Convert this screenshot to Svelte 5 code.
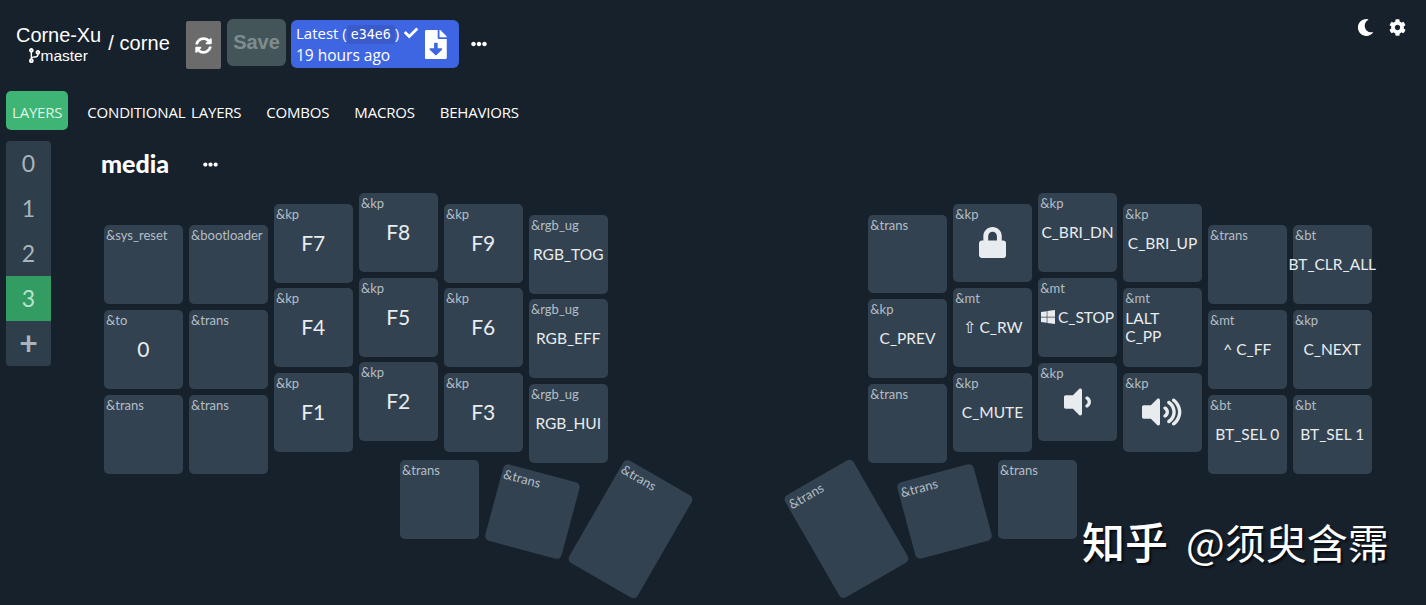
<script>
  const icons = {
    sync: [512, 'M370.72 133.28C339.458 104.008 298.888 87.962 255.848 88c-77.458.068-144.328 53.178-162.791 126.85-1.344 5.363-6.122 9.15-11.651 9.15H24.103c-7.498 0-13.194-6.807-11.807-14.176C33.933 94.924 134.813 8 256 8c66.448 0 126.791 26.136 171.315 68.685L463.03 40.97C478.149 25.851 504 36.559 504 57.941V192c0 13.255-10.745 24-24 24H345.941c-21.382 0-32.09-25.851-16.971-40.971l41.75-41.749zM32 296h134.059c21.382 0 32.09 25.851 16.971 40.971l-41.75 41.75c31.262 29.273 71.835 45.319 114.876 45.28 77.418-.07 144.315-53.144 162.787-126.849 1.344-5.363 6.122-9.15 11.651-9.15h57.304c7.498 0 13.194 6.807 11.807 14.176C478.067 417.076 377.187 504 256 504c-66.448 0-126.791-26.136-171.315-68.685L48.97 471.03C33.851 486.149 8 475.441 8 454.059V320c0-13.255 10.745-24 24-24z'],
    check: [512, 'M173.898 439.404l-166.4-166.4c-9.997-9.997-9.997-26.206 0-36.204l36.203-36.204c9.997-9.998 26.207-9.998 36.204 0L192 312.69 432.095 72.596c9.997-9.997 26.207-9.997 36.204 0l36.203 36.204c9.997 9.997 9.997 26.206 0 36.204l-294.4 294.401c-9.998 9.997-26.207 9.997-36.204-.001z'],
    file: [384, 'M224 136V0H24C10.7 0 0 10.7 0 24v464c0 13.3 10.7 24 24 24h336c13.3 0 24-10.7 24-24V160H248c-13.2 0-24-10.8-24-24zm76.45 211.36l-96.42 95.7c-6.65 6.61-17.39 6.61-24.04 0l-96.42-95.7C73.42 337.29 80.54 320 94.82 320H160v-80c0-8.84 7.16-16 16-16h32c8.84 0 16 7.16 16 16v80h65.18c14.28 0 21.4 17.29 11.27 27.36zM377 105L279.1 7c-4.5-4.5-10.6-7-17-7H256v128h128v-6.1c0-6.3-2.5-12.4-7-16.9z'],
    dots: [512, 'M328 256c0 39.8-32.2 72-72 72s-72-32.2-72-72 32.2-72 72-72 72 32.2 72 72zm104-72c-39.8 0-72 32.2-72 72s32.2 72 72 72 72-32.2 72-72-32.2-72-72-72zm-352 0c-39.8 0-72 32.2-72 72s32.2 72 72 72 72-32.2 72-72-32.2-72-72-72z'],
    moon: [512, 'M283.211 512c78.962 0 151.079-35.925 198.857-94.792 7.068-8.708-.639-21.43-11.562-19.35-124.203 23.654-238.262-71.576-238.262-196.954 0-72.222 38.662-138.635 101.498-174.394 9.686-5.512 7.25-20.197-3.756-22.23A258.156 258.156 0 0 0 283.211 0c-141.309 0-256 114.511-256 256 0 141.309 114.511 256 256 256z'],
    cog: [512, 'M487.4 315.7l-42.6-24.6c4.3-23.2 4.3-47 0-70.2l42.6-24.6c4.9-2.8 7.1-8.6 5.5-14-11.1-35.6-30-67.8-54.7-94.6-3.8-4.1-10-5.1-14.8-2.3L380.8 110c-17.9-15.4-38.5-27.3-60.8-35.1V25.8c0-5.6-3.9-10.5-9.4-11.7-36.7-8.2-74.3-7.8-109.2 0-5.5 1.2-9.4 6.1-9.4 11.7V75c-22.2 7.9-42.8 19.8-60.8 35.1L88.7 85.5c-4.9-2.8-11-1.9-14.8 2.3-24.7 26.7-43.6 58.9-54.7 94.6-1.7 5.4.6 11.2 5.5 14L67.3 221c-4.3 23.2-4.3 47 0 70.2l-42.6 24.6c-4.9 2.8-7.1 8.6-5.5 14 11.1 35.6 30 67.8 54.7 94.6 3.8 4.1 10 5.1 14.8 2.3l42.6-24.6c17.9 15.4 38.5 27.3 60.8 35.1v49.2c0 5.6 3.9 10.5 9.4 11.7 36.7 8.2 74.3 7.8 109.2 0 5.5-1.2 9.4-6.1 9.4-11.7v-49.2c22.2-7.9 42.8-19.8 60.8-35.1l42.6 24.6c4.9 2.8 11 1.9 14.8-2.3 24.7-26.7 43.6-58.9 54.7-94.6 1.5-5.5-.7-11.3-5.6-14.1zM256 336c-44.1 0-80-35.9-80-80s35.9-80 80-80 80 35.9 80 80-35.9 80-80 80z'],
    branch: [384, 'M384 144c0-44.2-35.8-80-80-80s-80 35.8-80 80c0 36.4 24.3 67.1 57.5 76.8-.6 16.1-4.2 28.5-11 36.9-15.4 19.2-49.3 22.4-85.2 25.7-28.2 2.6-57.4 5.4-81.3 16.9v-144c32.5-10.2 56-40.5 56-76.3 0-44.2-35.8-80-80-80S0 35.8 0 80c0 35.8 23.5 66.1 56 76.3v199.3C23.5 365.9 0 396.2 0 432c0 44.2 35.8 80 80 80s80-35.8 80-80c0-34-21.2-63.1-51.2-74.6 3.1-5.2 7.8-9.8 14.9-13.4 16.2-8.2 40.4-10.4 66.1-12.8 42.2-3.9 90-8.4 118.2-43.4 14-17.4 21.1-39.8 21.6-67.9 31.6-10.8 54.4-40.7 54.4-75.9zM80 64c8.8 0 16 7.2 16 16s-7.2 16-16 16-16-7.2-16-16 7.2-16 16-16zm0 384c-8.8 0-16-7.2-16-16s7.2-16 16-16 16 7.2 16 16-7.2 16-16 16zm224-320c8.8 0 16 7.2 16 16s-7.2 16-16 16-16-7.2-16-16 7.2-16 16-16z'],
    lock: [448, 'M400 224h-24v-72C376 68.2 307.8 0 224 0S72 68.2 72 152v72H48c-26.5 0-48 21.5-48 48v192c0 26.5 21.5 48 48 48h352c26.5 0 48-21.5 48-48V272c0-26.5-21.5-48-48-48zm-104 0H152v-72c0-39.7 32.3-72 72-72s72 32.3 72 72v72z'],
    windows: [448, 'M0 93.7l183.6-25.3v177.4H0V93.7zm0 324.6l183.6 25.3V268.4H0v149.9zm203.8 28L448 480V268.4H203.8v177.9zm0-380.6v180.1H448V32L203.8 65.7z'],
    voldown: [384, 'M215.03 71.05L126.06 160H24c-13.26 0-24 10.74-24 24v144c0 13.25 10.74 24 24 24h102.06l88.97 88.95c15.03 15.03 40.97 4.47 40.97-16.97V88.02c0-21.46-25.96-31.98-40.97-16.97zM338.23 179.1c-11.6-6.35-26.19-2.17-32.61 9.45-6.39 11.61-2.16 26.2 9.45 32.61C327.98 228.28 336 241.63 336 256c0 14.38-8.02 27.72-20.92 34.81-11.61 6.41-15.84 21-9.45 32.61 6.43 11.66 21.05 15.8 32.61 9.45 28.23-15.55 45.77-45 45.77-76.88s-17.54-61.32-45.78-76.89z'],
    volup: [576, 'M215.03 71.05L126.06 160H24c-13.26 0-24 10.74-24 24v144c0 13.25 10.74 24 24 24h102.06l88.97 88.95c15.03 15.03 40.97 4.47 40.97-16.97V88.02c0-21.46-25.96-31.98-40.97-16.97zM480 256c0-63.53-32.06-121.94-85.77-156.24-11.19-7.14-26.03-3.82-33.12 7.46s-3.78 26.21 7.41 33.36C408.27 165.97 432 209.11 432 256s-23.73 90.03-63.48 115.42c-11.19 7.14-14.5 22.07-7.41 33.36 6.51 10.36 21.12 15.14 33.12 7.46C447.94 377.94 480 319.53 480 256zm-141.77-76.87c-11.58-6.33-26.19-2.16-32.61 9.45-6.39 11.61-2.16 26.2 9.45 32.61C327.98 228.28 336 241.63 336 256c0 14.38-8.02 27.72-20.92 34.81-11.61 6.41-15.84 21-9.45 32.61 6.43 11.66 21.05 15.8 32.61 9.45 28.23-15.55 45.77-45 45.77-76.88s-17.54-61.32-45.78-76.86zM462 66c-11-7-26-4-33 7s-4 26 7 33c44 34 76 96 76 150s-32 116-76 150c-11 7-14 22-7 33s22 14 33 7c60-42 98-120 98-190s-38-148-98-190z']
  };

  const tabs = ['LAYERS', 'CONDITIONAL LAYERS', 'COMBOS', 'MACROS', 'BEHAVIORS'];
  const layers = ['0', '1', '2', '3', '+'];

  // x, y are page-ish coordinates of the key; the canvas origin is subtracted below
  const t = '&trans';
  const grid = [
    [104, 225, '&sys_reset'], [189, 225, '&bootloader'], [274, 204, '&kp', 'F7', 'big'], [359, 193, '&kp', 'F8', 'big'], [444, 204, '&kp', 'F9', 'big'], [529, 215, '&rgb_ug', 'RGB_TOG'],
    [104, 310, '&to', '0', 'big'], [189, 310, t], [274, 288, '&kp', 'F4', 'big'], [359, 278, '&kp', 'F5', 'big'], [444, 288, '&kp', 'F6', 'big'], [529, 299, '&rgb_ug', 'RGB_EFF'],
    [104, 395, t], [189, 395, t], [274, 373, '&kp', 'F1', 'big'], [359, 362, '&kp', 'F2', 'big'], [444, 373, '&kp', 'F3', 'big'], [529, 384, '&rgb_ug', 'RGB_HUI'],
    [400, 460, t],
    [868.3, 214.5, t], [953.3, 203.5, '&kp', '', '', 'lock'], [1038.3, 193, '&kp', 'C_BRI_DN'], [1123.3, 203.5, '&kp', 'C_BRI_UP'], [1208, 225, t], [1293, 225, '&bt', 'BT_CLR_ALL'],
    [868.3, 299, '&kp', 'C_PREV'], [953.3, 288, '&mt', '⇧ C_RW'], [1038.3, 278, '&mt', 'C_STOP', 'win', 'windows'], [1123.3, 288, '&mt', 'LALT\nC_PP', 'multi'], [1208, 310, '&mt', '^ C_FF'], [1293, 310, '&kp', 'C_NEXT'],
    [868.3, 384, t], [953.3, 373, '&kp', 'C_MUTE'], [1038.3, 362.5, '&kp', '', '', 'voldown'], [1123.3, 373, '&kp', '', '', 'volup'], [1208, 395, '&bt', 'BT_SEL 0'], [1293, 395, '&bt', 'BT_SEL 1'],
    [998, 460, t]
  ];

  const keys = grid.map(([x, y, bind, label = '', cls = '', icon = '']) => ({ x: x - 104, y: y - 193, h: 78.5, rot: 0, bind, label, cls, icon }));

  // rotated thumb keys, placed by their centre
  const thumb = (cx, cy, h, rot) => ({ x: cx - 104 - 39.25, y: cy - 193 - h / 2, h, rot, bind: t, label: '', cls: '', icon: '' });
  keys.push(thumb(532.5, 511.5, 78.5, 15), thumb(630.5, 528.5, 118, 30), thumb(944, 511.5, 78.5, -15), thumb(846, 528.5, 118, -30));
</script>

{#snippet fa(name, cls)}
  <svg class="fa {cls}" viewBox="0 0 {icons[name][0]} 512" aria-hidden="true"><path fill="currentColor" d={icons[name][1]} /></svg>
{/snippet}

<div class="page">
  <header class="top">
    <div class="repo">
      <div class="owner">
        <span class="owner-name">Corne-Xu</span>
        <span class="branch">{@render fa('branch', 'branch-icon')}master</span>
      </div>
      <span class="slash">/ corne</span>
    </div>
    <button class="refresh">{@render fa('sync', 'sync-icon')}</button>
    <button class="save">Save</button>
    <button class="latest">
      <span class="latest-text">
        <span class="l1">Latest (<code>e34e6</code>){@render fa('check', 'check-icon')}</span>
        <span class="l2">19 hours ago</span>
      </span>
      {@render fa('file', 'file-icon')}
    </button>
    <span class="more">{@render fa('dots', 'dots-icon')}</span>
    <div class="top-right">
      {@render fa('moon', 'moon-icon')}
      {@render fa('cog', 'cog-icon')}
    </div>
  </header>

  <nav class="tabs">
    {#each tabs as tab, i}
      <span class="tab" class:active={i === 0}>{tab}</span>
    {/each}
  </nav>

  <main class="main">
    <aside class="layers">
      {#each layers as layer, i}
        <div class="layer" class:current={i === 3}>{layer}</div>
      {/each}
    </aside>
    <section class="content">
      <div class="title">
        <h2>media</h2>
        {@render fa('dots', 'dots-icon')}
      </div>
      <div class="board">
        {#each keys as k}
          <div class="key" style="left:{k.x}px;top:{k.y}px;height:{k.h}px;transform:rotate({k.rot}deg)">
            <span class="bind">{k.bind}</span>
            {#if k.icon && k.label}
              <span class="val {k.cls}">{@render fa(k.icon, 'inline-icon')}{k.label}</span>
            {:else if k.icon}
              <span class="val">{@render fa(k.icon, 'key-' + k.icon)}</span>
            {:else if k.label}
              <span class="val {k.cls}">{k.label}</span>
            {/if}
          </div>
        {/each}
      </div>
    </section>
  </main>

  <div class="watermark"><span class="zhihu">知乎</span>@须臾含霈</div>
</div>

<style>
  :global(body) {
    background: #17212c;
    overflow: hidden;
  }

  .page {
    position: relative;
    height: 605px;
    color: #fff;
    font-family: "Open Sans", "Liberation Sans", sans-serif;
    overflow: hidden;
  }

  .fa {
    display: inline-block;
    height: 1em;
    width: auto;
    flex: none;
  }

  .top {
    position: relative;
    display: flex;
    align-items: flex-start;
    height: 91px;
    padding: 19px 0 0 16px;
    box-sizing: border-box;
    font-family: "Liberation Sans", Arial, sans-serif;
  }

  .repo {
    display: flex;
    align-items: center;
    width: 170px;
    height: 48px;
  }

  .owner {
    display: flex;
    flex-direction: column;
    align-items: center;
    margin-right: 7px;
  }

  .owner-name {
    font-size: 20px;
    line-height: 25px;
    letter-spacing: -0.05px;
  }

  .branch {
    display: flex;
    align-items: center;
    font-size: 15.5px;
    line-height: 15px;
  }

  :global(.branch-icon) {
    font-size: 15px;
  }

  .slash {
    font-size: 20px;
    letter-spacing: 0.1px;
    margin-top: 1px;
  }

  button {
    border: 0;
    padding: 0;
    color: inherit;
    font: inherit;
  }

  .refresh {
    width: 35px;
    height: 48px;
    margin-top: 2px;
    background: #6b6b6b;
    border-radius: 2px;
    display: flex;
    align-items: center;
    justify-content: center;
    font-size: 17px;
  }

  .save {
    width: 59px;
    height: 47px;
    margin-left: 6px;
    background: #44555a;
    border-radius: 6px;
    color: #7f8c8d;
    font-size: 20px;
    font-weight: 700;
  }

  .latest {
    display: flex;
    align-items: center;
    width: 168px;
    height: 48px;
    margin: 1px 0 0 5px;
    padding-left: 5px;
    box-sizing: border-box;
    background: #3f66e2;
    border-radius: 6px;
    font-family: "Open Sans", sans-serif;
    text-align: left;
  }

  .latest-text {
    display: flex;
    flex-direction: column;
    width: 129px;
  }

  .l1 {
    font-size: 15px;
    line-height: 21px;
    white-space: nowrap;
  }

  code {
    font-family: "DejaVu Sans Mono", monospace;
    font-size: 13.3px;
    background: #3a5bc9;
    padding: 2px 4px;
    border-radius: 3px;
  }

  :global(.check-icon) {
    font-size: 14px;
    margin-left: 5px;
    vertical-align: -1px;
  }

  .l2 {
    font-size: 15.5px;
    line-height: 20px;
    white-space: nowrap;
  }

  :global(.file-icon) {
    font-size: 29px;
  }

  .more {
    margin: 17px 0 0 12px;
    font-size: 16px;
    line-height: 16px;
  }

  .top-right {
    position: absolute;
    top: 19px;
    right: 20px;
    display: flex;
    align-items: center;
    gap: 15px;
    font-size: 17px;
  }

  .tabs {
    display: flex;
    align-items: center;
    gap: 5px;
    padding-left: 6px;
    height: 39px;
    font-family: "Open Sans", sans-serif;
    font-size: 15px;
  }

  .tab {
    padding: 0 10px;
    height: 39px;
    line-height: 43px;
    letter-spacing: -0.2px;
    word-spacing: 2px;
  }

  .tab.active {
    padding: 0 6px;
    margin-right: 4px;
    background: #3eb575;
    border-radius: 5px;
    color: #dff3e8;
  }

  .main {
    display: flex;
    align-items: flex-start;
    margin-top: 11px;
    padding-left: 6px;
  }

  .layers {
    width: 45px;
    border-radius: 4px;
    overflow: hidden;
    background: #2f3e4b;
    font-family: Lato, sans-serif;
    font-size: 23px;
    color: #a9b4bd;
  }

  .layer {
    height: 45px;
    line-height: 45px;
    text-align: center;
  }

  .layer.current {
    background: #329c63;
    color: #b9e4cc;
  }

  .layer:last-child {
    font-size: 32px;
    font-weight: 700;
    line-height: 43px;
  }

  .content {
    margin-left: 50px;
    flex: 1;
  }

  .title {
    display: flex;
    align-items: center;
    gap: 34px;
    height: 46px;
    margin-bottom: 6px;
    font-size: 15px;
  }

  h2 {
    margin: -2px 0 0;
    font-family: Lato, sans-serif;
    font-size: 25px;
    font-weight: 900;
    line-height: 46px;
  }

  .board {
    position: relative;
    margin-left: 3px;
    height: 400px;
  }

  .key {
    position: absolute;
    width: 78.5px;
    background: #334250;
    border-radius: 5px;
    display: flex;
    align-items: center;
    justify-content: center;
    font-family: Lato, sans-serif;
  }

  .bind {
    position: absolute;
    top: 2px;
    left: 2px;
    font-size: 13px;
    line-height: 16px;
    color: #b4bec6;
    white-space: nowrap;
  }

  .val {
    font-size: 15.5px;
    color: #e8ecee;
    white-space: nowrap;
    display: flex;
    align-items: center;
  }

  .val.big {
    font-size: 21px;
    padding-bottom: 2px;
  }

  .val.multi {
    white-space: pre-line;
    width: 100%;
    padding-left: 2px;
    line-height: 18px;
  }

  :global(.inline-icon) {
    font-size: 16px;
    margin-right: 3px;
  }

  :global(.key-lock) {
    font-size: 31px;
  }

  :global(.key-voldown),
  :global(.key-volup) {
    font-size: 36px;
  }

  .watermark {
    position: absolute;
    left: 1082px;
    top: 510px;
    font-family: "Noto Sans CJK SC", sans-serif;
    font-size: 41px;
    line-height: 60px;
    white-space: nowrap;
    text-shadow: 2px 2px 2px rgba(0, 0, 0, 0.7);
  }

  .zhihu {
    font-size: 43px;
    font-weight: 500;
    margin-right: 18px;
  }
</style>
